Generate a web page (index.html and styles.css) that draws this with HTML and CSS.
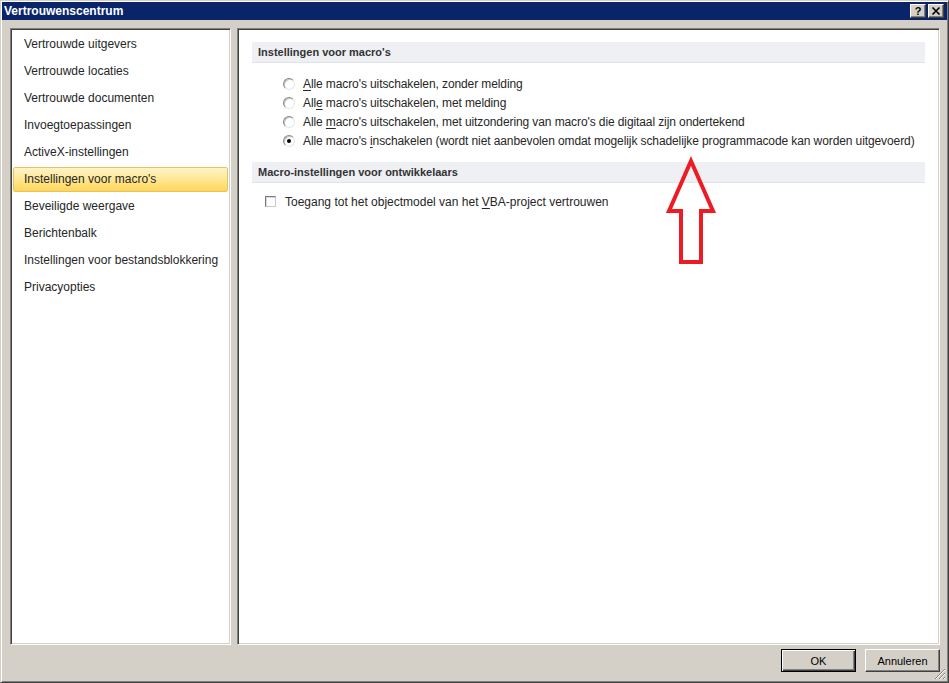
FILE: index.html
```html
<!DOCTYPE html>
<html lang="nl">
<head>
    <meta charset="UTF-8">
    <title>Vertrouwenscentrum</title>
    <link rel="stylesheet" href="styles.css">
</head>
<body>
    <div class="window">
        <div class="titlebar">
            <span class="title">Vertrouwenscentrum</span>
            <div class="caption-buttons">
                <span class="cap-btn help">?</span>
                <span class="cap-btn close">
                    <svg width="14" height="12" viewBox="0 0 14 12">
                        <path d="M3.5 2.5 L10.5 9.5 M10.5 2.5 L3.5 9.5" stroke="#000" stroke-width="1.7" fill="none"/>
                    </svg>
                </span>
            </div>
        </div>

        <div class="content">
            <div class="sidebar sunken">
                <ul class="nav">
                    <li class="nav-item">Vertrouwde uitgevers</li>
                    <li class="nav-item">Vertrouwde locaties</li>
                    <li class="nav-item">Vertrouwde documenten</li>
                    <li class="nav-item">Invoegtoepassingen</li>
                    <li class="nav-item">ActiveX-instellingen</li>
                    <li class="nav-item active">Instellingen voor macro's</li>
                    <li class="nav-item">Beveiligde weergave</li>
                    <li class="nav-item">Berichtenbalk</li>
                    <li class="nav-item">Instellingen voor bestandsblokkering</li>
                    <li class="nav-item">Privacyopties</li>
                </ul>
            </div>

            <div class="main sunken">
                <div class="section-head">Instellingen voor macro's</div>
                <div class="options">
                    <label class="option"><span class="radio"></span><span><u>A</u>lle macro's uitschakelen, zonder melding</span></label>
                    <label class="option"><span class="radio"></span><span>All<u>e</u> macro's uitschakelen, met melding</span></label>
                    <label class="option"><span class="radio"></span><span>Alle <u>m</u>acro's uitschakelen, met uitzondering van macro's die digitaal zijn ondertekend</span></label>
                    <label class="option"><span class="radio checked"></span><span>Alle macro's <u>i</u>nschakelen (wordt niet aanbevolen omdat mogelijk schadelijke programmacode kan worden uitgevoerd)</span></label>
                </div>

                <div class="section-head">Macro-instellingen voor ontwikkelaars</div>
                <div class="checks">
                    <label class="check-row"><span class="checkbox"></span><span>Toegang tot het objectmodel van het <u>V</u>BA-project vertrouwen</span></label>
                </div>
            </div>
        </div>

        <div class="footer">
            <button class="btn default">OK</button>
            <button class="btn">Annuleren</button>
        </div>

        <!-- annotation arrow drawn over the dialog -->
        <svg class="arrow" width="60" height="120" viewBox="0 0 60 120">
            <path d="M30 10 L52 60 L40 60 L40 111 L20 111 L20 60 L8 60 Z" fill="none" stroke="#ed1c24" stroke-width="4"/>
        </svg>

        <svg class="grip" width="12" height="12" viewBox="0 0 12 12">
            <path d="M11 1 L1 11 M11 5 L5 11 M11 9 L9 11" stroke="#808080" stroke-width="1" fill="none"/>
            <path d="M11 2 L2 11 M11 6 L6 11 M11 10 L10 11" stroke="#fff" stroke-width="1" fill="none"/>
        </svg>
    </div>
</body>
</html>
```

FILE: styles.css
```css
* {
    box-sizing: border-box;
}
body {
    margin: 0;
    background: #d4d0c8;
    font-family: "Liberation Sans", Arial, sans-serif;
    font-size: 12px;
    color: #262626;
}
.window {
    position: relative;
    width: 949px;
    height: 683px;
    padding: 1px;
    display: flex;
    flex-direction: column;
    background: #d4d0c8;
    border: 1px solid;
    border-color: #d4d0c8 #404040 #404040 #d4d0c8;
    box-shadow: inset 1px 1px #fff, inset -1px -1px #808080;
}

/* title bar */
.titlebar {
    height: 18px;
    flex: none;
    display: flex;
    align-items: center;
    justify-content: space-between;
    padding: 0 3px 0 2px;
    background: #0a246a;
}
.title {
    color: #fff;
    font-weight: bold;
    font-size: 12px;
}
.caption-buttons {
    display: flex;
    gap: 2px;
}
.cap-btn {
    width: 16px;
    height: 14px;
    display: flex;
    align-items: center;
    justify-content: center;
    background: #d4d0c8;
    border: 1px solid;
    border-color: #fff #404040 #404040 #fff;
    box-shadow: inset -1px -1px #808080;
    color: #000;
    font-weight: bold;
    font-size: 11px;
    line-height: 1;
}

/* panels */
.content {
    height: 625px;
    flex: none;
    display: flex;
    gap: 6px;
    padding: 8px 7px 0 8px;
}
.sunken {
    background: #fff;
    border: 1px solid;
    border-color: #808080 #fff #fff #808080;
    box-shadow: inset 1px 1px #404040, inset -1px -1px #d4d0c8;
}
.sidebar {
    width: 221px;
    flex: none;
}
.nav {
    list-style: none;
    margin: 0;
    padding: 3px 2px;
}
.nav-item {
    height: 25px;
    margin-bottom: 2px;
    padding-left: 10px;
    line-height: 23px;
    border: 1px solid transparent;
    border-radius: 2px;
}
.nav-item.active {
    border-color: #e5c365;
    background: linear-gradient(#fff4c8, #ffe793 50%, #ffd657);
}
.main {
    flex: 1;
    padding: 13px 14px;
}
.section-head {
    height: 21px;
    padding-left: 6px;
    line-height: 20px;
    font-size: 11px;
    font-weight: bold;
    color: #333;
    background: #eef0f4;
    border-bottom: 1px solid #e0e3e8;
}
.options {
    margin: 11px 0 12px;
    padding-left: 31px;
}
.option,
.check-row {
    height: 19px;
    display: flex;
    align-items: center;
    white-space: nowrap;
}
.option {
    letter-spacing: -0.1px;
}
.radio {
    width: 12px;
    height: 12px;
    flex: none;
    margin-right: 8px;
    border-radius: 50%;
    border: 1px solid;
    border-color: #8a8a8a #e6e6e6 #e6e6e6 #8a8a8a;
    box-shadow: inset 1px 1px #c4c4c4;
    background: #fff;
    display: flex;
    align-items: center;
    justify-content: center;
}
.radio.checked::after {
    content: "";
    width: 4px;
    height: 4px;
    border-radius: 50%;
    background: #000;
}
.checks {
    margin-top: 9px;
    padding-left: 13px;
}
.checkbox {
    width: 11px;
    height: 11px;
    flex: none;
    margin-right: 9px;
    background: #fff;
    border: 1px solid;
    border-color: #7c7c7c #c8c8c8 #c8c8c8 #7c7c7c;
    box-shadow: inset 1px 1px #d8d8d8;
}
u {
    text-decoration-thickness: 1px;
    text-underline-offset: 2px;
}

/* buttons */
.footer {
    height: 36px;
    flex: none;
    display: flex;
    justify-content: flex-end;
    gap: 9px;
    padding: 4px 7px 0 0;
}
.btn {
    width: 75px;
    height: 23px;
    padding: 0;
    font-family: "Liberation Sans", Arial, sans-serif;
    font-size: 11px;
    color: #000;
    background: #d4d0c8;
    border: 1px solid;
    border-color: #fff #404040 #404040 #fff;
    box-shadow: inset -1px -1px #808080;
}
.btn.default {
    border-color: #000;
    box-shadow: inset 1px 1px #fff, inset -1px -1px #404040, inset -2px -2px #808080;
}

/* overlays */
.arrow {
    position: absolute;
    left: 660px;
    top: 150px;
}
.grip {
    position: absolute;
    right: 2px;
    bottom: 2px;
}
```
